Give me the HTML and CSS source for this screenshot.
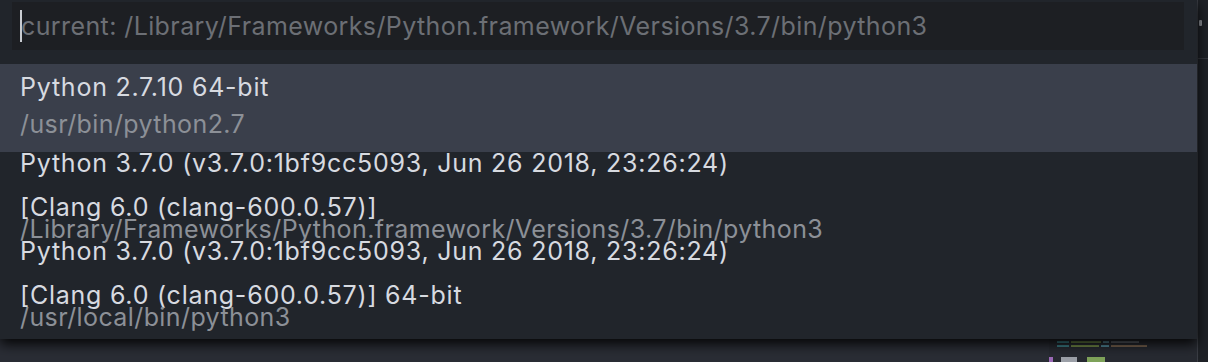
FILE: index.html
```html
<!DOCTYPE html>
<html>
<head>
<meta charset="utf-8">
<link rel="stylesheet" href="styles.css">
</head>
<body>
<div class="workspace">
  <div class="editor">
    <div class="code-area"></div>
    <div class="minimap">
      <div class="mini-row"><span class="m1"></span><span class="m2"></span><span class="m3"></span><span class="m4"></span></div>
      <div class="mini-row"><span class="m1"></span><span class="m5"></span><span class="m6"></span><span class="m7"></span></div>
      <div class="mini-row gap"><span class="m8"></span><span class="m9"></span><span class="m10"></span></div>
    </div>
    <div class="side-strip"><span class="handle"></span><span class="rule"></span></div>
  </div>

  <div class="panel">
    <div class="query">
      <span class="cursor"></span><span class="placeholder">current: /Library/Frameworks/Python.framework/Versions/3.7/bin/python3</span>
    </div>
    <ol class="list">
      <li class="item single selected">
        <div class="primary">Python 2.7.10 64-bit</div>
        <div class="secondary">/usr/bin/python2.7</div>
      </li>
      <li class="item double">
        <div class="primary">Python 3.7.0 (v3.7.0:1bf9cc5093, Jun 26 2018, 23:26:24)<br>[Clang 6.0 (clang-600.0.57)]</div>
        <div class="secondary">/Library/Frameworks/Python.framework/Versions/3.7/bin/python3</div>
      </li>
      <li class="item double">
        <div class="primary">Python 3.7.0 (v3.7.0:1bf9cc5093, Jun 26 2018, 23:26:24)<br>[Clang 6.0 (clang-600.0.57)] 64-bit</div>
        <div class="secondary">/usr/local/bin/python3</div>
      </li>
    </ol>
  </div>
</div>
</body>
</html>
```

FILE: styles.css
```css
html, body {
  margin: 0;
  padding: 0;
}

body {
  width: 1208px;
  height: 362px;
  overflow: hidden;
  background: #282c34;
  font-family: Inter, "Liberation Sans", sans-serif;
}

.workspace {
  position: relative;
  width: 1208px;
  height: 362px;
}

.editor {
  display: flex;
  height: 362px;
}

.code-area {
  flex: 1;
  background: #2a2d35;
}

.minimap {
  width: 149px;
  background: #272a31;
  border-right: 1px solid #3a3d44;
  padding-top: 341px;
  box-sizing: border-box;
}

.mini-row {
  display: flex;
  gap: 2px;
  height: 2px;
  margin: 0 0 2px 8px;
}

.mini-row.gap {
  margin-top: 10px;
  margin-left: 0;
  height: 5px;
}

.mini-row span {
  display: block;
  height: 100%;
}

.m1 { width: 12px; background: #3d7f88; }
.m2 { width: 30px; background: #667f45; }
.m3 { width: 6px; background: #55808f; }
.m4 { width: 28px; background: #5e626a; }
.m5 { width: 28px; background: #738b48; }
.m6 { width: 8px; background: #52899a; }
.m7 { width: 36px; background: #7a6450; }
.m8 { width: 4px; background: #9b6ab8; }
.m9 { width: 16px; background: #9ca0a8; margin-left: 6px; }
.m10 { width: 18px; background: #7fa35a; margin-left: 8px; }

.side-strip {
  width: 10px;
  background: #1e2126;
  display: flex;
  flex-direction: column;
}

.handle {
  display: block;
  width: 3px;
  height: 6px;
  margin-top: 20px;
  margin-left: 1px;
  background: #8a8d93;
  border-radius: 1px;
}

.rule {
  display: block;
  height: 1px;
  margin-top: 32px;
  background: #33363d;
}

/* modal overlay panel */
.panel {
  position: absolute;
  left: 0;
  top: 0;
  width: 1197px;
  height: 339px;
  background: #21252b;
  box-shadow: 0 5px 12px rgba(0, 0, 0, 0.9);
  padding-top: 2px;
  box-sizing: border-box;
}

.query {
  margin: 0 13px 0 12px;
  height: 48px;
  background: #1d1f23;
  display: flex;
  align-items: center;
  padding-left: 8px;
  box-sizing: border-box;
}

.cursor {
  display: block;
  width: 2px;
  height: 32px;
  background: #c9ccd1;
  margin-right: -1px;
}

.placeholder {
  font-size: 25px;
  letter-spacing: 0.4px;
  color: #6c6f75;
  white-space: nowrap;
  margin-top: -1px;
}

.list {
  list-style: none;
  margin: 14px 0 0 0;
  padding: 0;
}

.item {
  display: flow-root;
  height: 88px;
  padding-left: 20px;
  box-sizing: border-box;
  font-size: 25px;
  white-space: nowrap;
}

.item.selected {
  background: #3a3f4b;
}

.primary {
  color: #d7dae0;
  letter-spacing: 0.76px;
}

.secondary {
  color: #8c9097;
  letter-spacing: 0.4px;
}

.single .primary {
  padding-top: 4px;
  line-height: 38px;
}

.single .secondary {
  line-height: 36px;
}

.double .primary {
  margin-top: -11px;
  line-height: 44px;
  height: 69px;
}

.double .secondary {
  line-height: 38px;
}
```
